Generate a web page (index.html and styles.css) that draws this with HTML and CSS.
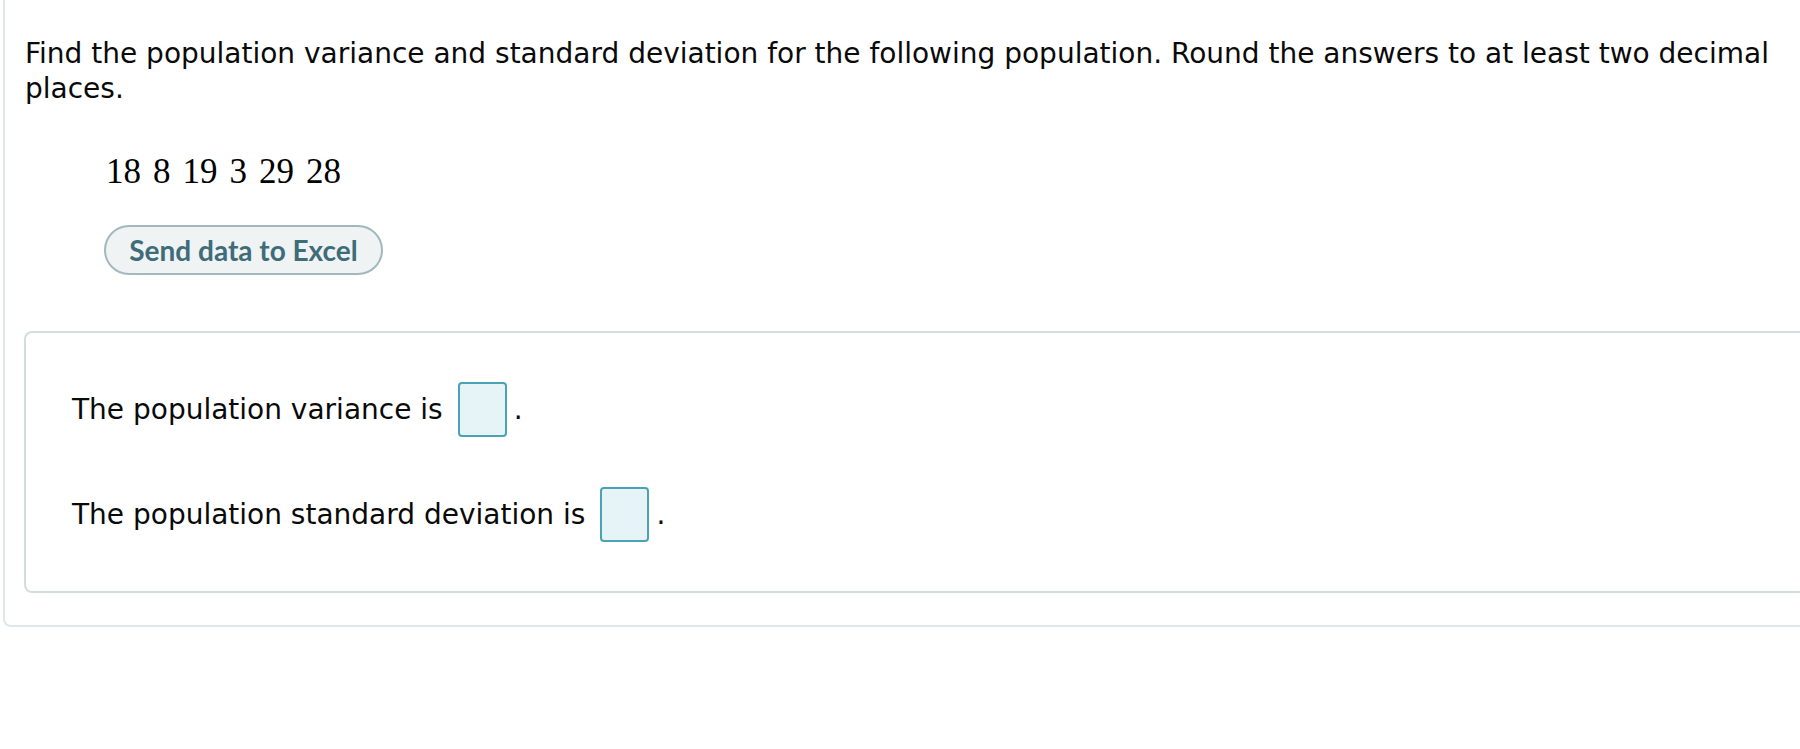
FILE: index.html
```html
<!DOCTYPE html>
<html>
<head>
<meta charset="utf-8">
<link rel="stylesheet" href="styles.css">
</head>
<body>
<div class="outer">
  <p class="question">Find the population variance and standard deviation for the following population. Round the answers to at least two decimal places.</p>
  <div class="data"><span>18</span><span>8</span><span>19</span><span>3</span><span>29</span><span>28</span></div>
  <button class="excel">Send data to Excel</button>
  <div class="answer">
    <div class="row"><span class="label">The population variance is</span><span class="box"></span><span class="dot">.</span></div>
    <div class="row"><span class="label">The population standard deviation is</span><span class="box"></span><span class="dot">.</span></div>
  </div>
</div>
</body>
</html>
```
FILE: styles.css
```css
html, body {
  margin: 0;
  padding: 0;
  background: #ffffff;
  overflow: hidden;
}
body {
  font-family: "DejaVu Sans", Verdana, sans-serif;
  color: #0a0a0a;
}
.outer {
  margin-left: 3px;
  width: 1850px;
  border: 2px solid #e0e6ea;
  border-top: none;
  border-right: none;
  border-radius: 0 0 0 8px;
  padding: 37px 0 32px 19px;
}
.question {
  margin: 0;
  padding-left: 1px;
  width: 1775px;
  font-size: 28px;
  line-height: 34.5px;
}
.data {
  margin: 48px 0 0 82px;
  font-family: "Liberation Serif", "Times New Roman", serif;
  font-size: 35px;
  line-height: 36px;
  color: #000;
  display: flex;
  gap: 12px;
}
.excel {
  display: block;
  margin: 35px 0 0 80px;
  width: 279px;
  height: 50px;
  border: 2px solid #a2b8be;
  border-radius: 25px;
  background: #eff3f4;
  color: #3e6c78;
  font-family: Lato, "Open Sans", sans-serif;
  font-weight: 700;
  font-size: 28px;
  padding: 0;
}
.answer {
  margin-top: 56px;
  border: 2px solid #d3dddd;
  border-right: none;
  border-radius: 8px 0 0 8px;
  padding: 49px 0 49px 46px;
  display: flex;
  flex-direction: column;
  gap: 50px;
}
.row {
  display: flex;
  align-items: center;
  height: 55px;
  font-size: 28px;
}
.box {
  width: 45px;
  height: 51px;
  margin-left: 15px;
  border: 2px solid #4aa3b4;
  border-radius: 4px;
  background: #e6f4f8;
}
.dot {
  margin-left: 7px;
}
```
